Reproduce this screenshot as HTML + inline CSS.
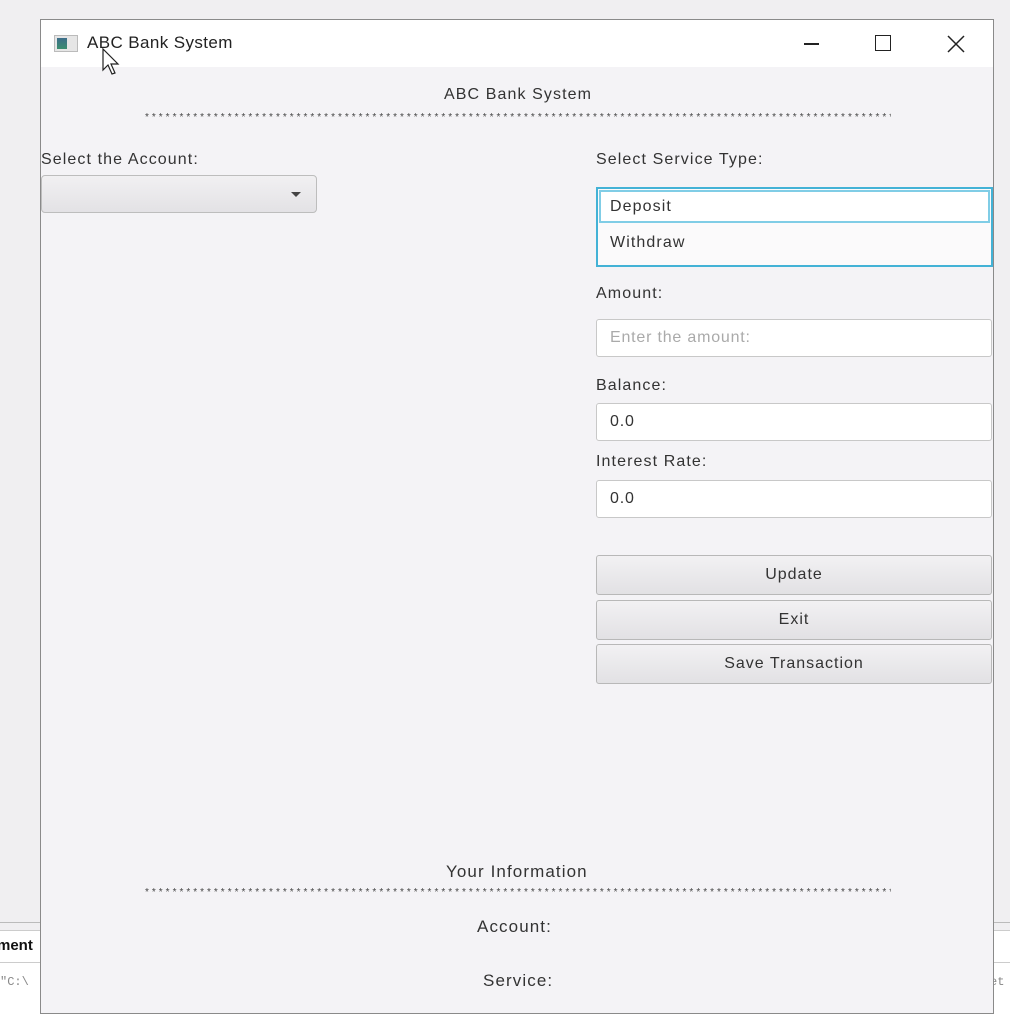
<!DOCTYPE html>
<html><head><meta charset="utf-8"><style>
*{margin:0;padding:0;box-sizing:border-box}
body{width:1010px;height:1024px;background:#f0eff1;position:relative;overflow:hidden;font-family:"Liberation Sans",sans-serif;color:#333}
.abs{position:absolute}
.win{left:40px;top:19px;width:954px;height:995px;border:1px solid #8a8a8a;background:#f4f3f6}
.title{left:41px;top:20px;width:952px;height:47px;background:#fff}
.lbl{font-size:16px;color:#333;letter-spacing:1.1px;white-space:nowrap}
.stars{font-size:10px;letter-spacing:3px;color:#444;white-space:nowrap;overflow:hidden;width:746px;left:145px;height:11px;line-height:12px}
.field{background:#fff;border:1px solid #c8c8c8;border-radius:3px;font-size:16px;padding-left:13px;line-height:36px;height:38px;left:596px;width:396px;letter-spacing:0.8px}
.btn{left:596px;width:396px;height:40px;border:1px solid #b8b8b8;border-radius:3px;background:linear-gradient(#f2f1f3,#e2e1e4);text-align:center;font-size:16px;line-height:38px;color:#333;letter-spacing:1px}
</style></head><body>
<div class="abs" style="left:0;top:922px;width:1010px;height:1px;background:#bbb"></div>
<div class="abs" style="left:0;top:930px;width:1010px;height:1px;background:#ccc"></div>
<div class="abs" style="left:0;top:931px;width:1010px;height:93px;background:#fff"></div>
<div class="abs" style="left:0;top:962px;width:1010px;height:1px;background:#ccc"></div>
<div class="abs" style="left:-3px;top:937px;font-weight:bold;font-size:15px;color:#111">ment</div>
<div class="abs" style="left:0;top:975px;font-family:'Liberation Mono',monospace;font-size:12px;color:#888">"C:\</div>
<div class="abs" style="left:990px;top:975px;font-family:'Liberation Mono',monospace;font-size:12px;color:#888">et</div>
<div class="abs win"></div>
<div class="abs title"></div>
<div class="abs" style="left:54px;top:35px;width:24px;height:17px;background:#e6e6e6;border:1px solid #bbb"><div style="position:absolute;left:2px;top:2px;width:10px;height:11px;background:linear-gradient(#3d6e8a,#3b8f6f)"></div></div>
<div class="abs" style="left:87px;top:33px;font-size:17px;color:#222;letter-spacing:0.4px">ABC Bank System</div>
<svg class="abs" style="left:100px;top:48px" width="20" height="30"><path d="M3 1 L3 22 L8 17 L12 26 L15 25 L11 16 L18 16 Z" fill="#fff" stroke="#222" stroke-width="1.2"/></svg>
<div class="abs" style="left:804px;top:43px;width:15px;height:1.5px;background:#222"></div>
<div class="abs" style="left:875px;top:35px;width:16px;height:16px;border:1.5px solid #222"></div>
<svg class="abs" style="left:947px;top:35px" width="18" height="18"><path d="M1 1L17 17M17 1L1 17" stroke="#222" stroke-width="1.5"/></svg>
<div class="abs lbl" style="left:444px;top:86px">ABC Bank System</div>
<div class="abs stars" style="top:112px">************************************************************************************************************************************</div>
<div class="abs lbl" style="left:41px;top:151px">Select the Account:</div>
<div class="abs" style="left:41px;top:175px;width:276px;height:38px;border:1px solid #bdbdbd;border-radius:4px;background:linear-gradient(#f1f0f2,#e3e2e5)"></div>
<div class="abs" style="left:291px;top:192px;width:0;height:0;border-left:5px solid transparent;border-right:5px solid transparent;border-top:5px solid #444"></div>
<div class="abs lbl" style="left:596px;top:151px">Select Service Type:</div>
<div class="abs" style="left:596px;top:187px;width:397px;height:80px;border:2px solid #43b2d6;background:#fbfafb"></div>
<div class="abs" style="left:599px;top:190px;width:391px;height:33px;border:2px solid #80cde6;background:#fff"></div>
<div class="abs lbl" style="left:610px;top:198px;font-size:16px">Deposit</div>
<div class="abs lbl" style="left:610px;top:234px;font-size:16px">Withdraw</div>
<div class="abs lbl" style="left:596px;top:285px">Amount:</div>
<div class="abs field" style="top:319px;color:#aaa">Enter the amount:</div>
<div class="abs lbl" style="left:596px;top:377px">Balance:</div>
<div class="abs field" style="top:403px">0.0</div>
<div class="abs lbl" style="left:596px;top:453px">Interest Rate:</div>
<div class="abs field" style="top:480px">0.0</div>
<div class="abs btn" style="top:555px">Update</div>
<div class="abs btn" style="top:600px">Exit</div>
<div class="abs btn" style="top:644px">Save Transaction</div>
<div class="abs lbl" style="left:446px;top:862px;font-size:17px">Your Information</div>
<div class="abs stars" style="top:887px">************************************************************************************************************************************</div>
<div class="abs lbl" style="left:477px;top:917px;font-size:17px">Account:</div>
<div class="abs lbl" style="left:483px;top:971px;font-size:17px">Service:</div>
</body></html>
